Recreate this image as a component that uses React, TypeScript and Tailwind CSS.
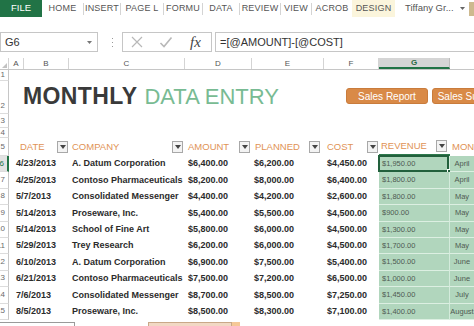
import React from 'react'

type Row = [string, string, string, string, string, string, string]

const rows: Row[] = [
  ['4/23/2013', 'A. Datum Corporation', '$6,400.00', '$6,200.00', '$4,450.00', '$1,950.00', 'April'],
  ['4/25/2013', 'Contoso Pharmaceuticals', '$8,200.00', '$8,000.00', '$6,400.00', '$1,800.00', 'April'],
  ['5/7/2013', 'Consolidated Messenger', '$4,400.00', '$4,200.00', '$2,600.00', '$1,800.00', 'May'],
  ['5/14/2013', 'Proseware, Inc.', '$5,400.00', '$5,500.00', '$4,500.00', '$900.00', 'May'],
  ['5/14/2013', 'School of Fine Art', '$5,800.00', '$6,000.00', '$4,500.00', '$1,300.00', 'May'],
  ['5/29/2013', 'Trey Research', '$6,200.00', '$6,000.00', '$4,500.00', '$1,700.00', 'May'],
  ['6/10/2013', 'A. Datum Corporation', '$6,900.00', '$7,500.00', '$5,400.00', '$1,500.00', 'June'],
  ['6/21/2013', 'Contoso Pharmaceuticals', '$7,500.00', '$7,200.00', '$6,500.00', '$1,000.00', 'June'],
  ['7/6/2013', 'Consolidated Messenger', '$8,700.00', '$8,500.00', '$7,250.00', '$1,450.00', 'July'],
  ['8/5/2013', 'Proseware, Inc.', '$8,500.00', '$8,300.00', '$7,100.00', '$1,400.00', 'August'],
]

// column widths, starting right after the row header (x = 9)
const colW = ['w-[60px]', 'w-[116px]', 'w-[67px]', 'w-[72px]', 'w-[55px]', 'w-[71px]', 'w-[30px]']
const headPad = ['pl-[11px] pr-[1px]', 'pl-[3px] pr-[2px]', 'pl-[3px] pr-[2px]', 'pl-[3px] pr-[4px]', 'pl-[3px] pr-[1px]', 'pl-[2px] pr-[3px]', 'pl-[2px]']
const dataPad = ['pl-[7px]', 'pl-[3px]', 'pl-[3px]', 'pl-[2px]', 'pl-[3px]', 'pl-[3px]', 'justify-center pr-[6px]']
const headers = ['DATE', 'COMPANY', 'AMOUNT', 'PLANNED', 'COST', 'REVENUE', 'MONTH']

const Sep = () => <div className="h-[12px] w-px shrink-0 bg-[#d4d4d4]" />

const Tab = ({ label, w, active }: { label: string; w: string; active?: boolean }) => (
  <div
    className={`flex h-full shrink-0 items-center justify-center whitespace-nowrap text-[9px] tracking-[0.2px] text-[#555] ${w} ${
      active ? 'bg-[#fbf5dc]' : ''
    }`}
  >
    {label}
  </div>
)

const RowHead = ({ n, bottom, selected }: { n: number; bottom?: boolean; selected?: boolean }) => (
  <div
    className={`flex h-full w-[9px] shrink-0 justify-end overflow-hidden border-b border-[#dcdcdc] pr-[3px] text-[8px] leading-none ${
      bottom ? 'items-end pb-[3px]' : 'items-center'
    } ${selected ? 'border-r-2 border-r-[#217346] bg-[#e2e2e2] text-[#217346]' : 'border-r border-r-[#c6c6c6] text-[#6a6a6a]'}`}
  >
    {n}
  </div>
)

const Filter = () => (
  <div className="flex h-[12px] w-[11px] shrink-0 items-center justify-center border border-[#a8a8a8] bg-[#f3f3f3]">
    <svg width="6" height="4" viewBox="0 0 6 4">
      <path d="M0 0H6L3 4Z" fill="#444" />
    </svg>
  </div>
)

export default function App() {
  return (
    <div className="relative h-[326px] w-[474px] overflow-hidden bg-white font-['Liberation_Sans',Arial,sans-serif]">
      {/* ribbon tabs */}
      <div className="flex h-[17px] items-center">
        <div className="flex h-full w-[42px] shrink-0 items-center justify-center bg-[#217346] text-[9.5px] text-white">FILE</div>
        <Tab label="HOME" w="w-[41px]" />
        <Sep />
        <Tab label="INSERT" w="w-[36px]" />
        <Sep />
        <Tab label="PAGE L" w="w-[42px]" />
        <Sep />
        <Tab label="FORMU" w="w-[38px]" />
        <Sep />
        <Tab label="DATA" w="w-[36px]" />
        <Sep />
        <Tab label="REVIEW" w="w-[40px]" />
        <Sep />
        <Tab label="VIEW" w="w-[30px]" />
        <Sep />
        <Tab label="ACROB" w="w-[40px]" />
        <Tab label="DESIGN" w="w-[43px]" active />
        <div className="ml-[10px] shrink-0 whitespace-nowrap text-[9.5px] text-[#555]">Tiffany Gr...</div>
        <svg className="ml-[6px] shrink-0" width="5" height="3" viewBox="0 0 5 3">
          <path d="M0 0H5L2.5 3Z" fill="#666" />
        </svg>
        <div className="ml-[4px] h-[14px] w-[8px] shrink-0 bg-[#cdb98f]" />
      </div>

      {/* formula bar */}
      <div className="mt-[15px] flex h-[20px]">
        <div className="flex w-[98px] items-center justify-between border border-[#c6c6c6] pl-[4px] pr-[5px]">
          <span className="text-[11px] text-[#333]">G6</span>
          <svg width="5" height="3" viewBox="0 0 5 3">
            <path d="M0 0H5L2.5 3Z" fill="#777" />
          </svg>
        </div>
        <div className="ml-[13px] flex w-[2px] flex-col items-center justify-center gap-[3px]">
          <div className="h-[1px] w-[1px] bg-[#999]" />
          <div className="h-[1px] w-[1px] bg-[#999]" />
          <div className="h-[1px] w-[1px] bg-[#999]" />
        </div>
        <div className="ml-[9px] flex w-[90px] items-center border border-[#c6c6c6] pl-[7px]">
          <svg width="14" height="14" viewBox="0 0 14 14">
            <path d="M2 2L12 12M12 2L2 12" stroke="#b8b8b8" strokeWidth="1.2" />
          </svg>
          <svg className="ml-[15px]" width="14" height="14" viewBox="0 0 14 14">
            <path d="M1.5 8L5 11.5L12.5 2.5" stroke="#b8b8b8" strokeWidth="1.6" fill="none" />
          </svg>
          <span className="ml-[17px] font-['Liberation_Serif',serif] text-[15px] italic leading-none text-[#444]">fx</span>
        </div>
        <div className="ml-[3px] flex flex-1 items-center border border-r-0 border-[#c6c6c6] pl-[4px] text-[11px] text-[#333]">
          =[@AMOUNT]-[@COST]
        </div>
      </div>

      {/* column letters */}
      <div className="mt-[6px] flex h-[12px] border-b border-[#c6c6c6] text-[8px] leading-none text-[#555]">
        <div className="flex w-[9px] shrink-0 items-end justify-end border-r border-[#d4d4d4] p-[1px]">
          <svg width="5" height="5" viewBox="0 0 5 5">
            <path d="M5 0V5H0Z" fill="#c2c2c2" />
          </svg>
        </div>
        <div className="flex w-[15px] shrink-0 items-center justify-center border-r border-[#d4d4d4]">A</div>
        <div className="flex w-[45px] shrink-0 items-center justify-center border-r border-[#d4d4d4]">B</div>
        <div className="flex w-[116px] shrink-0 items-center justify-center border-r border-[#d4d4d4]">C</div>
        <div className="flex w-[67px] shrink-0 items-center justify-center border-r border-[#d4d4d4]">D</div>
        <div className="flex w-[72px] shrink-0 items-center justify-center border-r border-[#d4d4d4]">E</div>
        <div className="flex w-[55px] shrink-0 items-center justify-center border-r border-[#d4d4d4]">F</div>
        <div className="flex w-[71px] shrink-0 items-center justify-center border-b-2 border-r border-b-[#217346] border-r-[#bdbdbd] bg-[#d5d5d5] font-bold text-[#2a6a44]">G</div>
        <div className="flex-1" />
      </div>

      {/* rows 1-4 */}
      <div className="flex h-[11px]">
        <RowHead n={1} />
      </div>
      <div className="flex h-[33px]">
        <RowHead n={2} bottom />
        <div className="flex flex-1 items-center pb-[3px]">
          <div className="flex w-[337px] shrink-0 items-baseline pl-[14px] leading-none">
            <span className="text-[23px] font-bold tracking-[0.4px] text-[#3a3a3a]">MONTHLY</span>
            <span className="ml-[7px] text-[22px] text-[#78bb93]">DATA ENTRY</span>
          </div>
          <div className="flex shrink-0 gap-[4px]">
            <div className="flex h-[16px] w-[82px] items-center justify-center rounded-[3px] border border-[#c97c3c] bg-[#d98a47] text-[10px] text-white">
              Sales Report
            </div>
            <div className="flex h-[16px] w-[82px] items-center justify-center rounded-[3px] border border-[#c97c3c] bg-[#d98a47] text-[10px] text-white">
              Sales Summary
            </div>
          </div>
        </div>
      </div>
      <div className="flex h-[14px]">
        <RowHead n={3} />
      </div>
      <div className="flex h-[10px]">
        <RowHead n={4} />
      </div>

      {/* table header row */}
      <div className="flex h-[18px]">
        <RowHead n={5} />
        {headers.map((h, i) => (
          <div
            key={h}
            className={`flex shrink-0 items-center justify-between whitespace-nowrap text-[9.5px] text-[#df9356] ${colW[i]} ${headPad[i]} ${
              i === 5 ? 'border-b-2 border-[#2f7a4d]' : ''
            }`}
          >
            <span>{h}</span>
            {i < 6 && <Filter />}
          </div>
        ))}
      </div>

      {/* data rows */}
      {rows.map((r, ri) => (
        <div key={ri} className="flex h-[16.4px]">
          <RowHead n={ri + 6} selected={ri === 0} />
          {r.map((v, ci) => (
            <div
              key={ci}
              className={`relative flex shrink-0 items-center whitespace-nowrap ${colW[ci]} ${dataPad[ci]} ${
                ci >= 5
                  ? 'border-b border-[#dcefe2] bg-[#b1d6bd] text-[7.5px] text-[#4f5a52]'
                  : 'text-[9px] font-bold text-[#2b2b2b]'
              } ${ci === 5 ? 'border-r border-r-[#d4ebdc]' : ''}`}
            >
              {v}
              {ci === 5 && ri === 0 && (
                <>
                  <div className="absolute -left-px -top-px h-[calc(100%+2px)] w-[calc(100%+1px)] border-2 border-[#22603c]" />
                  <div className="absolute -bottom-[2px] -right-[2px] h-[4px] w-[4px] border border-white bg-[#22603c]" />
                </>
              )}
            </div>
          ))}
        </div>
      ))}

      {/* bottom strip */}
      <div className="flex h-[6px] items-end">
        <div className="h-[4px] w-[75px] border-r border-t border-[#9a9a9a] bg-white" />
        <div className="w-[73px]" />
        <div className="h-[4px] w-[84px] border border-b-0 border-[#c9a888] bg-[#f1d8c4]" />
        <div className="h-[4px] w-[8px] bg-[#f5c897]" />
      </div>
    </div>
  )
}
